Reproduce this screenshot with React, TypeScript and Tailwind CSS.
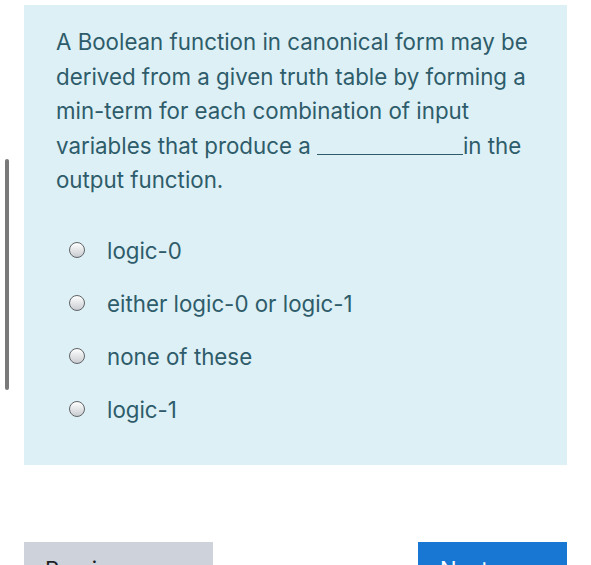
import React from "react";

const options = ["logic-0", "either logic-0 or logic-1", "none of these", "logic-1"];

function Radio() {
  return (
    <span className="inline-block w-[16px] h-[16px] rounded-full border border-[#5f6366] bg-gradient-to-b from-[#ffffff] to-[#c9ccd0] shrink-0" />
  );
}

export default function App() {
  return (
    <div className="relative w-[591px] h-[565px] overflow-hidden bg-white" style={{ fontFamily: "Inter, 'Noto Sans', sans-serif" }}>
      <div className="absolute left-[5px] top-[159px] w-[4px] h-[231px] rounded-sm bg-[#7a7a7a]" />
      <div className="pt-[5px] pl-[24px] pr-[24px]">
        <div className="bg-[#ddf0f6] h-[460px] pl-[32px] pt-[20px] text-[#2e5c6a]">
          <p className="w-[478px] text-[22.3px] leading-[34.5px]">
            A Boolean function in canonical form may be derived from a given truth table by forming a min-term for each combination of input variables that produce a{" "}
            <span className="inline-block w-[146px] border-b-[1.5px] border-[#2e5c6a] translate-y-[1px] h-[18px]" />in the output function.
          </p>
          <div className="mt-[37px] pl-[13px] flex flex-col gap-[22px]">
            {options.map((o) => (
              <div key={o} className="flex items-center h-[31px]">
                <Radio />
                <span className="ml-[22px] text-[22.3px] leading-[31px]">{o}</span>
              </div>
            ))}
          </div>
        </div>
        <div className="mt-[77px] flex justify-between">
          <div className="w-[189px] h-[50px] bg-[#ced3db] text-[#1d2125] text-[22px] pl-[21px] pt-[11px]">Previous page</div>
          <div className="w-[149px] h-[50px] bg-[#1877d2] text-white text-[22px] pl-[22px] pt-[11px]">Next page</div>
        </div>
      </div>
    </div>
  );
}
